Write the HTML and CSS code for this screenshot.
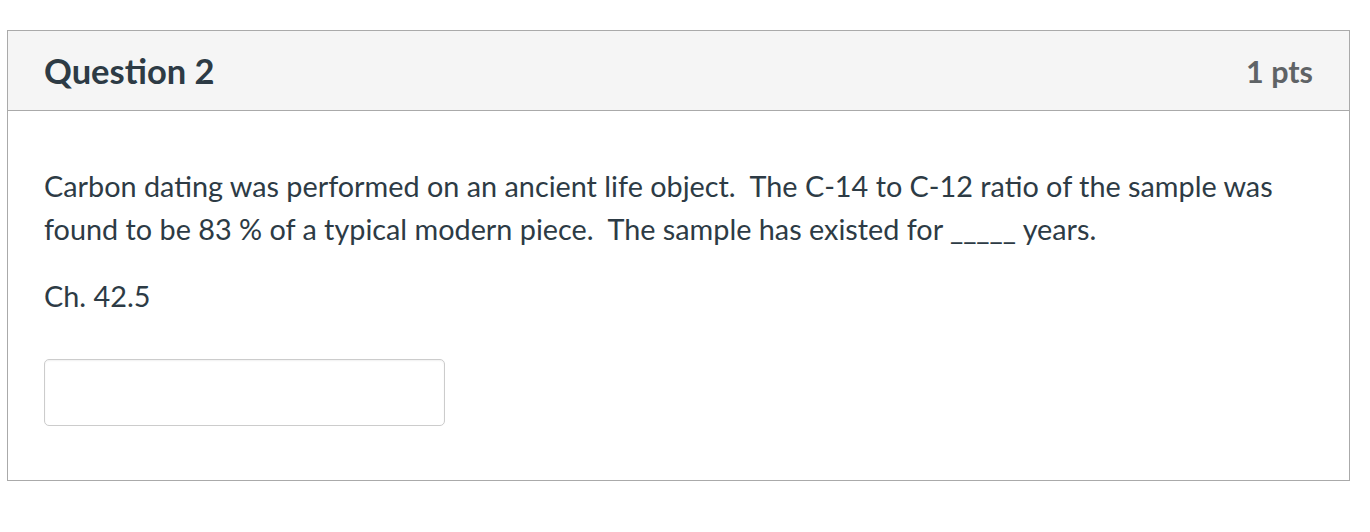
FILE: index.html
```html
<!DOCTYPE html>
<html lang="en">
<head>
<meta charset="utf-8">
<title>Question 2</title>
<link rel="stylesheet" href="styles.css">
</head>
<body>
<div class="page">
  <div class="question">
    <div class="question-header">
      <h2 class="question-title">Question 2</h2>
      <span class="question-points">1 pts</span>
    </div>
    <div class="question-body">
      <p class="question-text">Carbon dating was performed on an ancient life object.&nbsp; The C-14 to C-12 ratio of the sample was found to be 83 % of a typical modern piece.&nbsp; The sample has existed for _____ years.</p>
      <p class="question-ref">Ch. 42.5</p>
      <input class="answer-input" type="text" aria-label="Answer">
    </div>
  </div>
</div>
</body>
</html>
```

FILE: styles.css
```css
html, body {
  margin: 0;
  padding: 0;
  background: #ffffff;
}

body {
  font-family: Lato, "Noto Sans", sans-serif;
  color: #2d3b45;
}

.page {
  padding: 30px 20px 0 7px;
}

.question {
  width: 1341px;
  border: 1px solid #aaaaaa;
  background: #ffffff;
}

.question-header {
  display: flex;
  justify-content: space-between;
  align-items: center;
  height: 79px;
  padding: 0 36px;
  background: #f5f5f5;
  border-bottom: 1px solid #aaaaaa;
}

.question-title {
  margin: 0;
  font-size: 34.5px;
  line-height: 34px;
  font-weight: 700;
  color: #2d3b45;
}

.question-points {
  font-size: 30.5px;
  line-height: 34px;
  font-weight: 700;
  color: #5f6366;
}

.question-body {
  padding: 54px 36px 54px;
}

.question-text {
  margin: 0 0 24px;
  font-size: 28.8px;
  line-height: 43.2px;
}

.question-ref {
  margin: 0 0 40px;
  font-size: 28.8px;
  line-height: 43.2px;
}

.answer-input {
  display: block;
  box-sizing: border-box;
  width: 401px;
  height: 67px;
  margin: 0;
  border: 1px solid #cccccc;
  border-radius: 5px;
  background: #ffffff;
  box-shadow: inset 0 1px 2px rgba(0, 0, 0, 0.06);
}
```
